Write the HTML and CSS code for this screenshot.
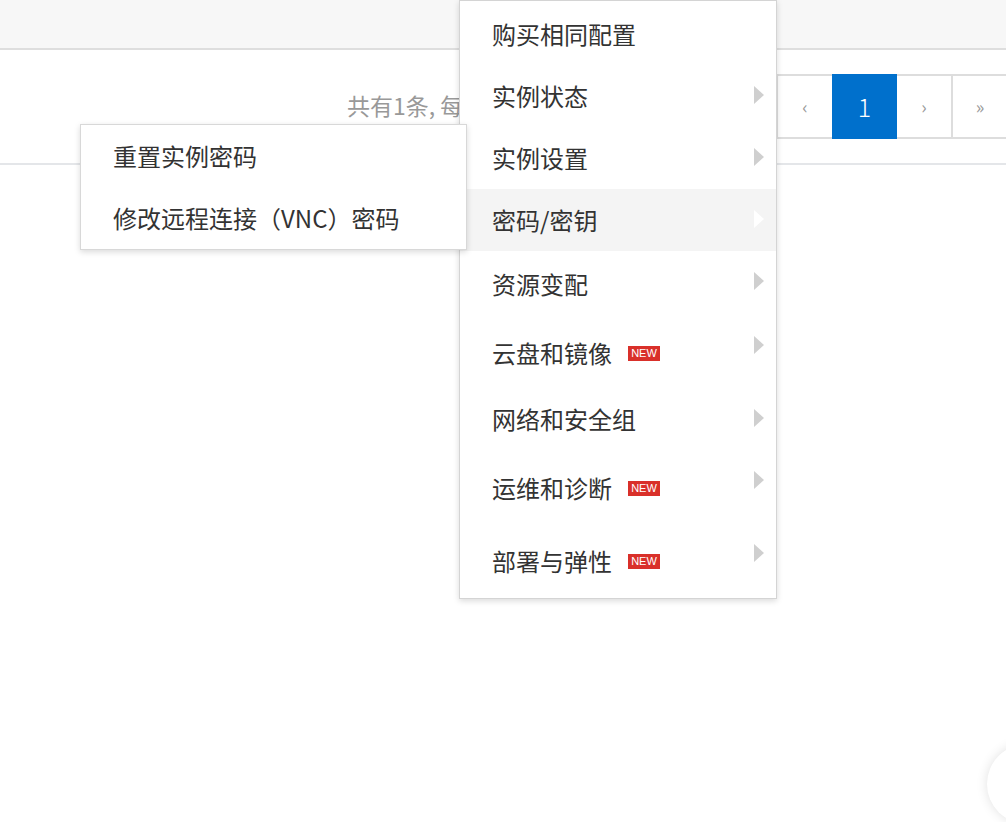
FILE: index.html
```html
<!DOCTYPE html>
<html lang="zh-CN">
<head>
  <meta charset="UTF-8">
  <title>实例操作</title>
  <link rel="stylesheet" href="styles.css">
</head>
<body>

<div class="page">
  <div class="table-head"></div>

  <div class="pager-row">
    <span class="pager-info">共有1条, 每页显示：10条</span>
    <ul class="pager">
      <li>«</li>
      <li>‹</li>
      <li class="active">1</li>
      <li>›</li>
      <li>»</li>
    </ul>
  </div>

  <div class="rule"></div>

  <ul class="menu">
    <li class="menu-item">购买相同配置</li>
    <li class="menu-item has-sub">实例状态<i class="arrow"></i></li>
    <li class="menu-item has-sub">实例设置<i class="arrow"></i></li>
    <li class="menu-item has-sub hover">密码/密钥<i class="arrow"></i></li>
    <li class="menu-item has-sub tall">资源变配<i class="arrow"></i></li>
    <li class="menu-item has-sub is-new">云盘和镜像<span class="badge">NEW</span><i class="arrow"></i></li>
    <li class="menu-item has-sub">网络和安全组<i class="arrow"></i></li>
    <li class="menu-item has-sub is-new">运维和诊断<span class="badge">NEW</span><i class="arrow"></i></li>
    <li class="menu-item has-sub is-new">部署与弹性<span class="badge">NEW</span><i class="arrow"></i></li>
  </ul>

  <ul class="submenu">
    <li class="menu-item">重置实例密码</li>
    <li class="menu-item">修改远程连接（VNC）密码</li>
  </ul>

  <div class="float-btn"></div>
</div>

</body>
</html>
```

FILE: styles.css
```css
html, body {
  margin: 0;
  padding: 0;
  background: #fff;
  overflow: hidden;
}

body {
  font-family: "Noto Sans CJK SC", "Noto Sans", sans-serif;
  color: #333;
}

ul {
  list-style: none;
  margin: 0;
  padding: 0;
}

.page {
  position: relative;
  height: 822px;
  overflow: hidden;
}

.table-head {
  height: 48px;
  background: #f7f7f7;
  border-bottom: 2px solid #dedede;
}

.pager-row {
  display: flex;
  align-items: center;
  padding: 24px 0 24px 347px;
  margin-right: -3px;
}

.pager-info {
  width: 112px;
  overflow: hidden;
  margin-top: -4px;
  margin-right: auto;
  font-size: 23px;
  color: #999;
  white-space: nowrap;
}

.pager {
  display: flex;
  border: 2px solid #ddd;
  border-left: none;
}

.pager li {
  width: 54px;
  height: 61px;
  line-height: 61px;
  text-align: center;
  border-left: 2px solid #ddd;
  color: #999;
  font-size: 18px;
}

.pager li.active {
  width: 65px;
  margin: -2px 0;
  height: 65px;
  line-height: 65px;
  border-left: none;
  background: #0070cc;
  color: #fff;
  font-size: 25px;
  font-weight: 300;
}

.pager li.active + li {
  border-left: none;
}

.rule {
  height: 2px;
  background: #e4e6e9;
}

.menu {
  position: absolute;
  left: 459px;
  top: 0;
  width: 316px;
  padding: 2px 0 2px;
  background: #fff;
  border: 1px solid #d4d4d4;
  box-shadow: 0 2px 6px rgba(0, 0, 0, 0.15);
}

.menu-item {
  position: relative;
  padding-left: 32px;
  line-height: 62px;
  font-size: 24px;
  color: #333;
  white-space: nowrap;
}

.menu-item.tall {
  padding-top: 2px;
}

.menu-item.is-new {
  padding-top: 7px;
  padding-bottom: 4px;
}

.menu-item.hover {
  background: #f4f4f4;
}

.arrow {
  position: absolute;
  right: 12px;
  top: 21px;
  width: 0;
  height: 0;
  border-left: 10px solid #cfcfcf;
  border-top: 9px solid transparent;
  border-bottom: 9px solid transparent;
}

.hover .arrow {
  border-left-color: #fff;
}

.badge {
  display: inline-block;
  margin-left: 16px;
  width: 32px;
  height: 15px;
  line-height: 15px;
  vertical-align: 6px;
  background: #d9302a;
  color: #fff;
  font-family: "Liberation Sans", Arial, sans-serif;
  font-size: 11px;
  text-align: center;
}

.submenu {
  position: absolute;
  left: 80px;
  top: 124px;
  width: 385px;
  background: #fff;
  border: 1px solid #d8d8d8;
  box-shadow: 0 2px 6px rgba(0, 0, 0, 0.15);
}

.float-btn {
  position: absolute;
  left: 987px;
  top: 744px;
  width: 80px;
  height: 80px;
  border-radius: 50%;
  background: #fff;
  box-shadow: 0 0 12px rgba(0, 0, 0, 0.12);
}
```
